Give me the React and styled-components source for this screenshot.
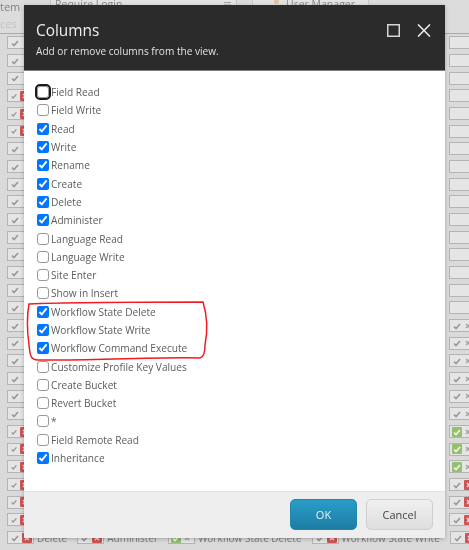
import React from "react";
import styled, { createGlobalStyle } from "styled-components";

const Global = createGlobalStyle`
  html, body { margin: 0; padding: 0; width: 469px; height: 550px; overflow: hidden; background: #dcdcdc; }
  * { box-sizing: border-box; }
`;
const Page = styled.div`
  position: relative; width: 469px; height: 550px; overflow: hidden;
  font-family: "Open Sans", "Liberation Sans", sans-serif; background: #dadada;
  filter: blur(0.35px);
`;
const Toolbar = styled.div`
  height: 34px; background: #dcdcdc; border-bottom: 1px solid #a9a9a9; display: flex;
  color: #8a8a8a; font-size: 11px;
`;
const ToolLabels = styled.div`
  width: 50px; display: flex; flex-direction: column; line-height: 14px;
`;
const ToolWord = styled.span`
  color: ${p => p.$faint ? "#c2c2c2" : "#808080"};
  margin-top: ${p => p.$faint ? "3px" : "0"};
`;
const SelectBox = styled.div`
  width: 187px; height: 10px; border: 1px solid #c6c6c6; border-top: 0; background: #e4e4e4;
  line-height: 8px; padding: 0 5px 0 4px; overflow: hidden; color: #8a8a8a; font-size: 10.5px;
  display: flex; justify-content: space-between; align-items: flex-start;
`;
const UserTab = styled.div`
  margin-left: 15px; width: 117px; height: 10px; border: 1px solid #cacaca; border-top: 0; background: #e4e4e4;
  line-height: 8px; padding-left: 20px; overflow: hidden; font-size: 10.5px; color: #8a8a8a;
  display: flex; gap: 6px; align-items: flex-start;
`;
const Grid = styled.div`
  display: flex; flex-direction: column; padding-left: 7px;
`;
const Row = styled.div`
  height: 17.68px; display: flex; align-items: center; justify-content: space-between;
  font-size: 10px; color: #7c7c7c; white-space: nowrap;
`;
const LabelRow = styled(Row)`
  justify-content: flex-start; gap: 10px;
`;
const Cell = styled.div`
  width: ${p => p.$w || 24}px; height: 13px; display: flex; align-items: center; gap: 2px; flex: none;
  background: #e5e5e5; border: 1px solid #b4b4b4; padding-left: 2px;
`;
const Pair = styled.div`
  display: flex; align-items: center; gap: 3px; flex: none;
`;
const RightCell = styled(Cell)`
  width: 30px; margin-right: -10px;
`;
const Badge = styled.span`
  width: 10px; height: 10px; flex: none; border-radius: 1px; display: inline-flex; align-items: center; justify-content: center;
  background: ${p => p.$c === "red" ? "#cf5554" : "#93bf71"};
`;
const Dialog = styled.div`
  position: absolute; left: 24px; top: 5px; width: 421px; height: 533px; background: #fff;
  display: flex; flex-direction: column; box-shadow: 0 1px 4px rgba(0,0,0,.25);
`;
const Header = styled.header`
  height: 66px; flex: none; background: #2b2b2b; border-bottom: 1px solid #7d7d7d;
  padding: 15px 14px 0 12px; display: flex; justify-content: space-between; color: #eee;
`;
const Title = styled.h1`
  margin: 0; font-size: 15.4px; line-height: 21px; font-weight: 400; color: #eee;
`;
const Subtitle = styled.p`
  margin: 3px 0 0; font-size: 10.1px; line-height: 14px; color: #e2e2e2;
`;
const HeaderTools = styled.div`
  display: flex; gap: 17px; padding-top: 4px;
`;
const List = styled.div`
  flex: 1; padding: 12px 12px 0 13px; display: flex; flex-direction: column; align-items: flex-start;
`;
const Option = styled.label`
  height: 18.3px; display: flex; align-items: center; gap: 2px; font-size: 10.15px; color: #5c5c5c; white-space: nowrap;
`;
const Check = styled.input.attrs({ type: "checkbox" })`
  width: 12px; height: 12px; margin: 0; flex: none; accent-color: #0075ff;
  &:not(:checked) {
    appearance: none; background: #fff; border: 1px solid #9a9a9a; border-radius: 3px;
  }
  ${p => p.$focus ? "outline: 2px solid #1a1a1a; outline-offset: 0; border-radius: 3px;" : ""}
`;
const Footer = styled.footer`
  height: 47px; flex: none; background: #eee; border-top: 1px solid #e2e2e2;
  display: flex; justify-content: flex-end; align-items: flex-start; gap: 9px; padding: 7px 12px 0 0;
`;
const Button = styled.button`
  width: 67px; height: 31px; border-radius: 5px; font: 400 11px "Open Sans", "Liberation Sans", sans-serif; padding: 0;
  ${p => p.$primary
    ? "background: linear-gradient(#2a9cc9, #1d7da3); border: 1px solid #2087ad; color: #e6f2f7;"
    : "background: linear-gradient(#f0f0f0, #dedede); border: 1px solid #d0d0d0; color: #444;"}
`;
const Lasso = styled.svg`
  position: absolute; left: 0; top: 0; pointer-events: none;
`;

const Tick = () => (
  <svg width="10" height="10" viewBox="0 0 10 10"><path d="M2 5.5 L4 7.5 L8 3" fill="none" stroke="#979797" strokeWidth="1.6" /></svg>
);
const WhiteTick = () => (
  <svg width="10" height="10" viewBox="0 0 10 10"><path d="M2 5.5 L4 7.5 L8 3" fill="none" stroke="#f0f7ea" strokeWidth="1.6" /></svg>
);
const Cross = ({ color = "#f4dede" }) => (
  <svg width="8" height="8" viewBox="0 0 8 8"><path d="M2 2 L6 6 M6 2 L2 6" stroke={color} strokeWidth="1.5" /></svg>
);
const SelectGlyph = () => (
  <svg width="7" height="6" viewBox="0 0 7 6" style={{ flex: "none", marginTop: 1 }}><path d="M0 1.5 H7 M0 4 H7" stroke="#a0a0a0" strokeWidth="1" /></svg>
);
const Avatar = () => (
  <svg width="7" height="7" viewBox="0 0 7 7" style={{ flex: "none" }}><circle cx="3.5" cy="1.5" r="2.5" fill="#e3c3a0" /><path d="M0.5 7 Q3.5 3 6.5 7 Z" fill="#c9a98a" /></svg>
);

const options = [
  ["Field Read", false], ["Field Write", false], ["Read", true], ["Write", true], ["Rename", true],
  ["Create", true], ["Delete", true], ["Administer", true], ["Language Read", false], ["Language Write", false],
  ["Site Enter", false], ["Show in Insert", false], ["Workflow State Delete", true], ["Workflow State Write", true],
  ["Workflow Command Execute", true], ["Customize Profile Key Values", false], ["Create Bucket", false],
  ["Revert Bucket", false], ["*", false], ["Field Remote Read", false], ["Inheritance", true],
];

const rightKind = i => {
  if (i < 16) return "empty";
  if (i < 22) return "grey";
  if (i < 25) return "green";
  return "red";
};

const RightState = ({ kind }) => {
  if (kind === "empty") return <RightCell />;
  return (
    <RightCell>
      {kind === "green" ? <Badge $c="green"><WhiteTick /></Badge> : <Tick />}
      {kind === "red" ? <Badge $c="red"><Cross /></Badge> : <Cross color="#a5a5a5" />}
    </RightCell>
  );
};

const leftRed = i => (i >= 3 && i <= 5) || i >= 22;

const DenyCell = () => <Cell $w={27}><Tick /><Badge $c="red"><Cross /></Badge></Cell>;

export default function App() {
  const rows = Array.from({ length: 28 }, (_, i) => i);
  return (
    <Page>
      <Global />
      <Toolbar>
        <ToolLabels>
          <ToolWord>tem</ToolWord>
          <ToolWord $faint>ces</ToolWord>
        </ToolLabels>
        <SelectBox>Require Login<SelectGlyph /></SelectBox>
        <UserTab><Avatar />User Manager</UserTab>
      </Toolbar>
      <Grid>
        {rows.map(i => (
          <Row key={i}>
            <Cell $w={24}><Tick />{leftRed(i) && <Badge $c="red"><Cross /></Badge>}</Cell>
            <RightState kind={rightKind(i)} />
          </Row>
        ))}
        <LabelRow>
          <Pair><DenyCell />Delete</Pair>
          <Pair><DenyCell />Administer</Pair>
          <Pair><Cell $w={27}><Badge $c="green"><WhiteTick /></Badge><Cross color="#a5a5a5" /></Cell>Workflow State Delete</Pair>
          <Pair><DenyCell />Workflow State Write</Pair>
          <Pair><DenyCell /></Pair>
        </LabelRow>
      </Grid>
      <Dialog>
        <Header>
          <div>
            <Title>Columns</Title>
            <Subtitle>Add or remove columns from the view.</Subtitle>
          </div>
          <HeaderTools>
            <svg width="13" height="13" viewBox="0 0 13 13"><rect x="0.75" y="0.75" width="11.5" height="11.5" fill="none" stroke="#d6d6d6" strokeWidth="1.5" /></svg>
            <svg width="14" height="13" viewBox="0 0 14 13"><path d="M1 0.5 L13 12.5 M13 0.5 L1 12.5" stroke="#e6e6e6" strokeWidth="1.6" fill="none" /></svg>
          </HeaderTools>
        </Header>
        <List>
          {options.map(([label, on], i) => (
            <Option key={label}>
              <Check defaultChecked={on} $focus={i === 0} />
              {label}
            </Option>
          ))}
        </List>
        <Footer>
          <Button $primary>OK</Button>
          <Button>Cancel</Button>
        </Footer>
      </Dialog>
      <Lasso width="469" height="550" viewBox="0 0 469 550">
        <path d="M29 304 C70 302 150 302 203 302 C207 315 208 330 205 345 C205 352 204 357 200 358 C150 357 80 361 38 360 C31 360 30 356 29 345 C27 330 27 315 29 304 Z" fill="none" stroke="#f01c22" strokeWidth="1.5" />
      </Lasso>
    </Page>
  );
}
